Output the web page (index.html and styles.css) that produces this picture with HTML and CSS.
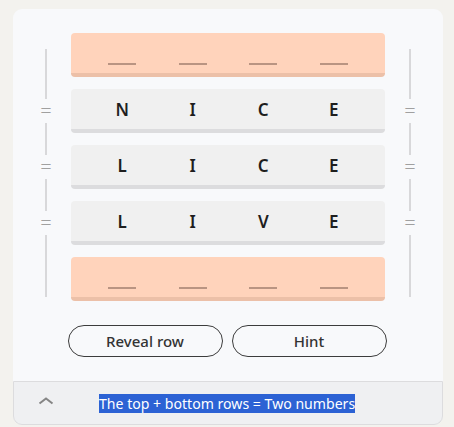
FILE: index.html
```html
<!DOCTYPE html>
<html>
<head>
<meta charset="utf-8">
<link rel="stylesheet" href="styles.css">
</head>
<body>
<div class="card">
  <div class="board">
    <div class="side">
      <div class="line l1"></div>
      <div class="eq">=</div>
      <div class="line l2"></div>
      <div class="eq">=</div>
      <div class="line l2"></div>
      <div class="eq">=</div>
      <div class="line l4"></div>
    </div>
    <div class="rows">
      <div class="row blank"><span class="dash"></span><span class="dash"></span><span class="dash"></span><span class="dash"></span></div>
      <div class="row"><span>N</span><span>I</span><span>C</span><span>E</span></div>
      <div class="row"><span>L</span><span>I</span><span>C</span><span>E</span></div>
      <div class="row"><span>L</span><span>I</span><span>V</span><span>E</span></div>
      <div class="row blank"><span class="dash"></span><span class="dash"></span><span class="dash"></span><span class="dash"></span></div>
    </div>
    <div class="side">
      <div class="line l1"></div>
      <div class="eq">=</div>
      <div class="line l2"></div>
      <div class="eq">=</div>
      <div class="line l2"></div>
      <div class="eq">=</div>
      <div class="line l4"></div>
    </div>
  </div>
  <div class="actions">
    <button class="btn">Reveal row</button>
    <button class="btn">Hint</button>
  </div>
  <div class="footer">
    <svg class="chev" width="16" height="10" viewBox="0 0 16 10"><path d="M1.5 7.5 L8 2.5 L14.5 7.5" fill="none" stroke="#858585" stroke-width="2"/></svg>
    <span class="clue">The top + bottom rows = Two numbers</span>
  </div>
</div>
</body>
</html>
```
FILE: styles.css
```css
html, body {
  margin: 0;
  padding: 0;
  background: #f3f2ee;
  font-family: "Noto Sans", "Open Sans", sans-serif;
}
body {
  padding: 9px 11px 2px 13px;
}
.card {
  width: 430px;
  height: 416px;
  background: #f8f9fb;
  border-radius: 9px;
  display: flex;
  flex-direction: column;
  box-sizing: border-box;
}
.board {
  display: flex;
  padding: 24px 22px 0 22px;
  gap: 14px;
}
.side {
  width: 22px;
  display: flex;
  flex-direction: column;
  align-items: center;
  padding-top: 16px;
}
.line {
  width: 2px;
  background: #d8d8da;
}
.l1 { height: 50px; }
.l2 { height: 32px; }
.l4 { height: 62px; }
.eq {
  height: 24px;
  line-height: 24px;
  font-size: 20px;
  font-weight: 300;
  color: #a0a0a0;
  text-align: center;
}
.rows {
  width: 314px;
  display: flex;
  flex-direction: column;
  gap: 12px;
}
.row {
  height: 40px;
  background: #f0f0f0;
  border-bottom: 4px solid #dcdcde;
  border-radius: 4px;
  display: grid;
  grid-template-columns: repeat(4, 1fr);
  padding: 0 16px;
  align-items: center;
  justify-items: center;
  font-size: 17px;
  font-weight: 600;
  color: #1e1e1e;
}
.row.blank {
  background: #ffd3bb;
  border-bottom-color: #ecc0a8;
  align-items: end;
}
.dash {
  width: 28px;
  height: 2px;
  background: #b99482;
  margin-bottom: 8px;
}
.actions {
  display: flex;
  justify-content: center;
  gap: 9px;
  margin-top: 24px;
  padding-right: 2px;
}
.btn {
  width: 155px;
  height: 32px;
  border: 1px solid #3c3c3c;
  border-radius: 16px;
  background: transparent;
  font-family: "Noto Sans", "Open Sans", sans-serif;
  font-size: 15px;
  font-weight: 500;
  color: #333;
  padding: 0;
}
.footer {
  margin-top: auto;
  height: 44px;
  box-sizing: border-box;
  background: #eff0f2;
  border: 1px solid #dcdcde;
  border-radius: 0 0 9px 9px;
  display: flex;
  align-items: center;
  padding-left: 24px;
}
.chev {
  display: block;
  margin-top: -5px;
}
.clue {
  margin-left: 45px;
  background: #2c62d4;
  color: #fff;
  font-size: 14.1px;
  line-height: 19px;
}
```
